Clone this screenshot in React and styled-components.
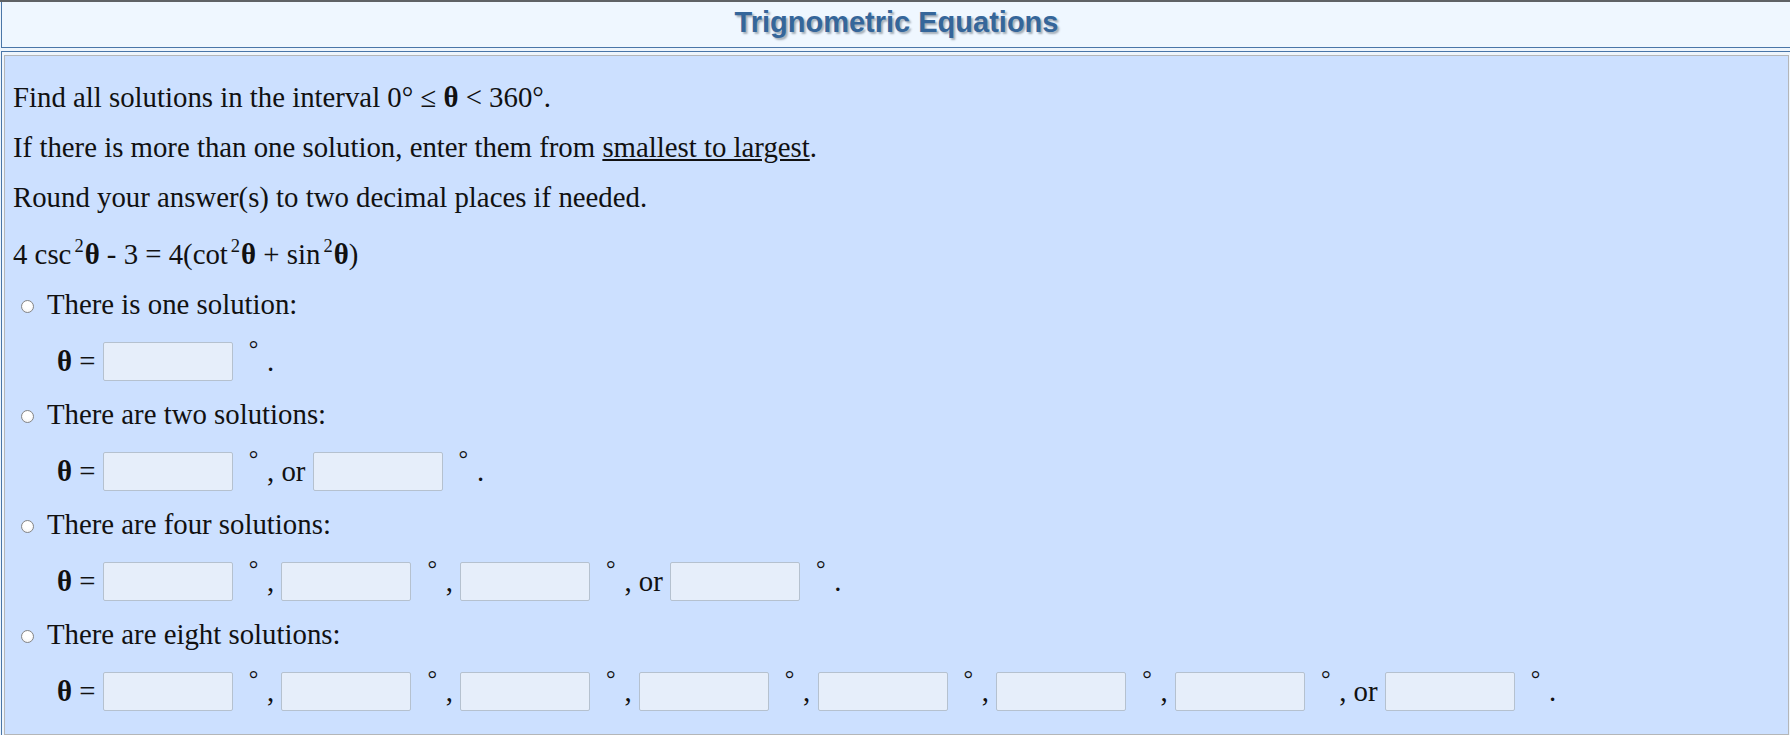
import React from "react";
import styled, { createGlobalStyle } from "styled-components";

const GlobalStyle = createGlobalStyle`
    body {
        margin: 0;
        background: #eef5fc;
        overflow: hidden;
    }
`;

const Page = styled.div`
    border-top: 2px solid #5f6265;
    font-family: "Liberation Serif", "Times New Roman", serif;
    color: #111;
`;

const Header = styled.div`
    margin: 0 -2px 0 1px;
    height: 45px;
    border: 1px solid #4a76a8;
    border-top: none;
    background: #eff7ff;
    display: flex;
    justify-content: center;
    align-items: flex-start;
`;

const Title = styled.h1`
    margin: 0;
    font-family: "Liberation Sans", Arial, sans-serif;
    font-size: 29px;
    font-weight: 700;
    line-height: 41px;
    color: #35669a;
    text-shadow: 2px 2px 2px #a3adb8;
`;

const OuterBox = styled.div`
    margin: 3px -2px 0 1px;
    border: 1px solid #4a76a8;
    padding: 3px 2px 0 2px;
    background: #eef5fc;
`;

const QuestionBox = styled.div`
    border: 1px solid #b4b6b8;
    background: #cce0ff;
    padding: 16px 0 15px 8px;
    font-size: 28.8px;
`;

const Line = styled.div`
    height: 50px;
    line-height: 50px;
    padding-top: ${(p) => p.$top || 0}px;
    white-space: pre;
`;

const Sup = styled.sup`
    font-size: 18.5px;
    line-height: 0;
    vertical-align: 12px;
    margin: 0 1px 0 3px;
`;

const RadioLine = styled.label`
    display: flex;
    align-items: flex-start;
    height: 50px;
`;

const Radio = styled.input.attrs({ type: "radio", name: "solutions" })`
    appearance: none;
    width: 13px;
    height: 13px;
    margin: 21px 13px 0 8px;
    border: 1px solid #858585;
    border-radius: 50%;
    background: radial-gradient(circle at 50% 40%, #ffffff 40%, #ececec 100%);
    box-sizing: border-box;
`;

const RadioText = styled.span`
    line-height: 50px;
`;

const AnswerRow = styled.div`
    display: flex;
    align-items: flex-start;
    height: 60px;
    box-sizing: border-box;
    padding: 13px 0 0 44px;
`;

const Label = styled.span`
    line-height: 39px;
    white-space: pre;
`;

const AnswerInput = styled.input.attrs({ type: "text" })`
    width: 130px;
    height: 39px;
    box-sizing: border-box;
    margin: 0;
    border: 1px solid #b5c1cf;
    border-radius: 2px;
    background: #e6eefa;
    font-family: "Liberation Serif", "Times New Roman", serif;
    font-size: 22px;
    padding: 0 6px;
    outline: none;
`;

const Degree = styled.span`
    width: 34.3px;
    flex: none;
    box-sizing: border-box;
    padding-left: 16px;
    margin-top: -5px;
    font-size: 24px;
    line-height: 24px;
`;

const Punct = styled.span`
    line-height: 39px;
    white-space: pre;
`;

const Theta = () => <b>θ</b>;

function Answers({ count }) {
    const items = [];
    for (let i = 0; i < count; i++) {
        const last = i === count - 1;
        const sep = last ? "." : i === count - 2 ? ", or " : ", ";
        items.push(
            <React.Fragment key={i}>
                <AnswerInput aria-label={`answer ${i + 1}`} />
                <Degree>°</Degree>
                <Punct>{sep}</Punct>
            </React.Fragment>
        );
    }
    return (
        <AnswerRow>
            <Label>
                <Theta /> ={" "}
            </Label>
            {items}
        </AnswerRow>
    );
}

const options = [
    { text: "There is one solution:", count: 1 },
    { text: "There are two solutions:", count: 2 },
    { text: "There are four solutions:", count: 4 },
    { text: "There are eight solutions:", count: 8 },
];

export default function App() {
    return (
        <Page>
            <GlobalStyle />
            <Header>
                <Title>Trignometric Equations</Title>
            </Header>
            <OuterBox>
                <QuestionBox>
                    <Line>
                        Find all solutions in the interval 0° ≤ <Theta /> &lt; 360°.
                    </Line>
                    <Line>
                        If there is more than one solution, enter them from <u>smallest to largest</u>.
                    </Line>
                    <Line>Round your answer(s) to two decimal places if needed.</Line>
                    <Line $top={7}>
                        4 csc<Sup>2</Sup><Theta /> - 3 = 4(cot<Sup>2</Sup><Theta /> + sin<Sup>2</Sup><Theta />)
                    </Line>
                    {options.map((o) => (
                        <React.Fragment key={o.count}>
                            <RadioLine>
                                <Radio />
                                <RadioText>{o.text}</RadioText>
                            </RadioLine>
                            <Answers count={o.count} />
                        </React.Fragment>
                    ))}
                </QuestionBox>
            </OuterBox>
        </Page>
    );
}
